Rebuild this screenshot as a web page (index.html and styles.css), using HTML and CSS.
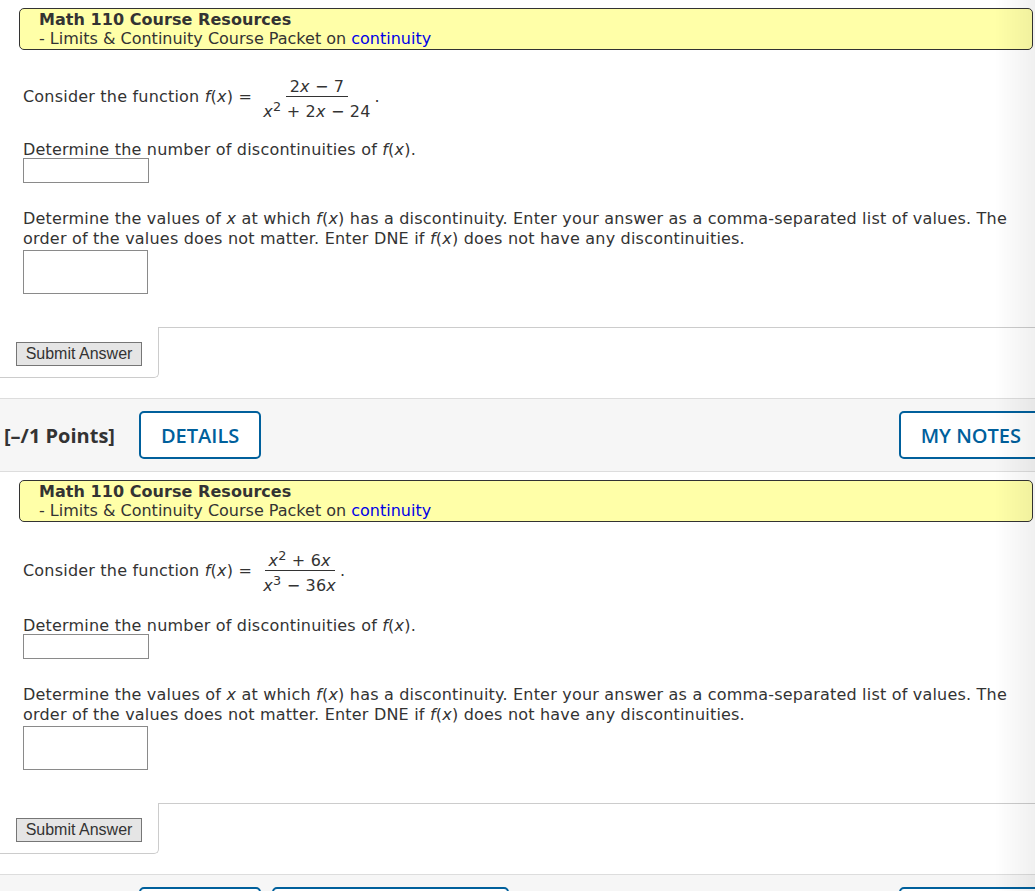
FILE: index.html
```html
<!DOCTYPE html>
<html lang="en">
<head>
<meta charset="utf-8">
<title>Continuity questions</title>
<link rel="stylesheet" href="styles.css">
</head>
<body>
<div class="page">

  <section class="question">
    <div class="resources">
      <div class="res-title">Math 110 Course Resources</div>
      <div class="res-item">- Limits &amp; Continuity Course Packet on <a href="#" class="res-link">continuity</a></div>
    </div>
    <p class="statement">Consider the function <i>f</i>(<i>x</i>) =
      <span class="frac"><span class="num">2<i>x</i> − 7</span><span class="den"><i>x</i><sup>2</sup> + 2<i>x</i> − 24</span></span>.</p>
    <p class="prompt">Determine the number of discontinuities of <i>f</i>(<i>x</i>).</p>
    <input class="answer small" type="text">
    <p class="prompt long">Determine the values of <i>x</i> at which <i>f</i>(<i>x</i>) has a discontinuity. Enter your answer as a comma-separated list of values. The order of the values does not matter. Enter DNE if <i>f</i>(<i>x</i>) does not have any discontinuities.</p>
    <input class="answer big" type="text">
    <div class="submit-row">
      <div class="submit-cell"><button class="submit" type="button">Submit Answer</button></div>
      <div class="submit-rest"></div>
    </div>
  </section>

  <div class="points-bar">
    <span class="points">[–/1 Points]</span>
    <button class="bar-btn" type="button">DETAILS</button>
    <button class="bar-btn notes" type="button">MY NOTES</button>
  </div>

  <section class="question">
    <div class="resources">
      <div class="res-title">Math 110 Course Resources</div>
      <div class="res-item">- Limits &amp; Continuity Course Packet on <a href="#" class="res-link">continuity</a></div>
    </div>
    <p class="statement">Consider the function <i>f</i>(<i>x</i>) =
      <span class="frac tall"><span class="num"><i>x</i><sup>2</sup> + 6<i>x</i></span><span class="den"><i>x</i><sup>3</sup> − 36<i>x</i></span></span>.</p>
    <p class="prompt">Determine the number of discontinuities of <i>f</i>(<i>x</i>).</p>
    <input class="answer small" type="text">
    <p class="prompt long">Determine the values of <i>x</i> at which <i>f</i>(<i>x</i>) has a discontinuity. Enter your answer as a comma-separated list of values. The order of the values does not matter. Enter DNE if <i>f</i>(<i>x</i>) does not have any discontinuities.</p>
    <input class="answer big" type="text">
    <div class="submit-row">
      <div class="submit-cell"><button class="submit" type="button">Submit Answer</button></div>
      <div class="submit-rest"></div>
    </div>
  </section>

  <div class="points-bar">
    <span class="points">[–/1 Points]</span>
    <button class="bar-btn" type="button">DETAILS</button>
    <button class="bar-btn" type="button">PRACTICE ANOTHER</button>
    <button class="bar-btn notes" type="button">MY NOTES</button>
  </div>

</div>
<div class="edge-fade"></div>
</body>
</html>
```

FILE: styles.css
```css
html, body {
  margin: 0;
  padding: 0;
  overflow: hidden;
  background: #ffffff;
}

.page {
  width: 1052px;
  font-family: "DejaVu Sans", Verdana, sans-serif;
  font-size: 16px;
  color: #333333;
}

.question {
  padding: 8px 19px 20px 23px;
  display: flex;
  flex-direction: column;
  align-items: flex-start;
}

.resources {
  align-self: stretch;
  margin-left: -4px;
  background: #ffffa8;
  border: 1px solid #333333;
  border-radius: 5px;
  padding: 1px 19px 1px 19px;
  line-height: 19px;
}

.res-title {
  font-weight: bold;
  letter-spacing: 0.05px;
}

.res-link {
  color: #0000e6;
  text-decoration: none;
}

p {
  margin: 0;
  line-height: 20px;
  letter-spacing: 0.2px;
}

.statement {
  margin-top: 28px;
}

.frac {
  display: inline-flex;
  flex-direction: column;
  align-items: center;
  vertical-align: 10px;
  margin: 0 0 0 2px;
}

.num {
  padding: 0 4px;
  border-bottom: 1px solid #333333;
  line-height: 18px;
}

.frac.tall .num {
  padding-top: 2px;
}

.den {
  padding: 5px 4px 0;
  line-height: 20px;
}

.frac.tall .den {
  padding-bottom: 2px;
}

sup {
  font-size: 0.8em;
  line-height: 0;
  vertical-align: 0.45em;
}

.prompt {
  margin-top: 18px;
}

.prompt.long {
  margin-top: 26px;
  max-width: 1005px;
}

.answer {
  box-sizing: border-box;
  margin: 0;
  padding: 0;
  background: #ffffff;
  border: 1px solid #8a8a8a;
  border-radius: 0;
}

.answer.small {
  width: 126px;
  height: 25px;
  margin-top: -2px;
}

.answer.big {
  width: 125px;
  height: 44px;
  margin-top: 1px;
}

.submit-row {
  align-self: stretch;
  margin: 33px -19px 0 -23px;
  display: flex;
}

.submit-cell {
  box-sizing: border-box;
  width: 159px;
  height: 51px;
  border-right: 1px solid #cccccc;
  border-bottom: 1px solid #cccccc;
  border-bottom-right-radius: 5px;
  padding: 15px 0 0 16px;
}

.submit-rest {
  flex: 1;
  border-top: 1px solid #cccccc;
}

.submit {
  box-sizing: border-box;
  width: 126px;
  height: 24px;
  padding: 0;
  background: #e5e5e5;
  border: 1px solid #767676;
  border-radius: 0;
  font-family: "Liberation Sans", Arial, sans-serif;
  font-size: 16px;
  color: #333333;
}

.points-bar {
  display: flex;
  align-items: center;
  gap: 11px;
  background: #f6f6f6;
  border-top: 1px solid #dddddd;
  border-bottom: 1px solid #dddddd;
  padding: 12px 9px 12px 4px;
  font-family: "Open Sans", sans-serif;
}

.points {
  font-size: 20px;
  font-weight: bold;
  color: #333333;
  margin-right: 13px;
}

.bar-btn {
  box-sizing: border-box;
  height: 48px;
  padding: 0 20px;
  background: #ffffff;
  border: 2px solid #00609c;
  border-radius: 5px;
  color: #00609c;
  font-family: "Open Sans", sans-serif;
  font-size: 20px;
  font-weight: 600;
}

.bar-btn.notes {
  margin-left: auto;
}

.edge-fade {
  position: fixed;
  top: 0;
  right: 0;
  width: 40px;
  height: 100%;
  pointer-events: none;
  background: linear-gradient(to right, rgba(0, 0, 0, 0), rgba(0, 0, 0, 0.06));
}
```
